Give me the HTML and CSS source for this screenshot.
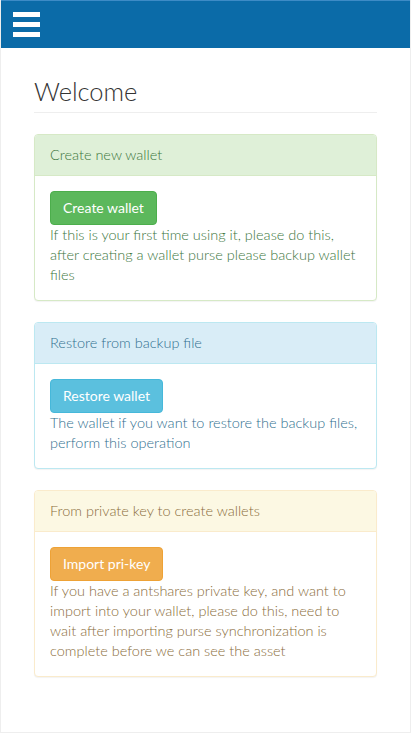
FILE: index.html
```html
<!DOCTYPE html>
<html lang="en">
<head>
<meta charset="utf-8">
<title>Welcome</title>
<link rel="stylesheet" href="styles.css">
</head>
<body>
<header class="topbar">
  <button class="menu-btn" aria-label="Menu">
    <span class="bar"></span>
    <span class="bar"></span>
    <span class="bar"></span>
  </button>
</header>
<main class="content">
  <h2 class="page-title">Welcome</h2>

  <section class="panel panel-success">
    <div class="panel-heading">Create new wallet</div>
    <div class="panel-body">
      <button class="btn btn-success">Create wallet</button>
      <p class="desc">If this is your first time using it, please do this, after creating a wallet purse please backup wallet files</p>
    </div>
  </section>

  <section class="panel panel-info">
    <div class="panel-heading">Restore from backup file</div>
    <div class="panel-body">
      <button class="btn btn-info">Restore wallet</button>
      <p class="desc">The wallet if you want to restore the backup files, perform this operation</p>
    </div>
  </section>

  <section class="panel panel-warning">
    <div class="panel-heading">From private key to create wallets</div>
    <div class="panel-body">
      <button class="btn btn-warning">Import pri-key</button>
      <p class="desc">If you have a antshares private key, and want to import into your wallet, please do this, need to wait after importing purse synchronization is complete before we can see the asset</p>
    </div>
  </section>
</main>
</body>
</html>
```

FILE: styles.css
```css
* { box-sizing: border-box; }

html, body {
  margin: 0;
  padding: 0;
  height: 100%;
}

body {
  font-family: Lato, "Open Sans", "Liberation Sans", sans-serif;
  font-size: 14px;
  line-height: 20px;
  color: #333;
  background: #fff;
  border-left: 1px solid #eeeeee;
  border-right: 1px solid #eeeeee;
  border-bottom: 1px solid #eeeeee;
  display: flex;
  flex-direction: column;
}

.topbar {
  height: 48px;
  background: #0b6ba8;
  border-top: 1px solid #3d8bc6;
  display: flex;
  align-items: flex-start;
  margin: 0 -1px;
}

.menu-btn {
  margin: 11px 0 0 13px;
  padding: 0;
  border: 0;
  background: transparent;
  display: flex;
  flex-direction: column;
  gap: 5px;
  width: 27px;
}

.menu-btn .bar {
  display: block;
  width: 27px;
  height: 5px;
  background: #fff;
}

.content {
  padding: 0 33px 0 33px;
}

.page-title {
  margin: 29px 0 21px 0;
  padding-bottom: 7px;
  border-bottom: 1px solid #eeeeee;
  font-size: 25.5px;
  line-height: 28px;
  font-weight: 300;
  color: #333;
}

.panel {
  border: 1px solid;
  border-radius: 4px;
  margin-bottom: 21px;
  background: #fff;
  box-shadow: 0 1px 1px rgba(0,0,0,0.05);
}

.panel-heading {
  padding: 10px 15px;
  border-bottom: 1px solid;
  border-radius: 3px 3px 0 0;
  font-weight: 300;
  font-size: 14.5px;
}

.panel-body {
  padding: 15px;
  display: flex;
  flex-direction: column;
  align-items: flex-start;
}

.desc {
  margin: 0;
  font-weight: 300;
  font-size: 14.5px;
}

.panel-success { border-color: #d6e9c6; color: #3c763d; }
.panel-success .panel-heading { background: #dff0d8; border-color: #d6e9c6; }

.panel-info { border-color: #bce8f1; color: #31708f; }
.panel-info .panel-heading { background: #d9edf7; border-color: #bce8f1; }

.panel-warning { border-color: #faebcc; color: #8a6d3b; }
.panel-warning .panel-heading { background: #fcf8e3; border-color: #faebcc; }

.btn {
  font-family: inherit;
  font-size: 14px;
  line-height: 20px;
  padding: 6px 12px;
  border: 1px solid transparent;
  border-radius: 4px;
  color: #fff;
  font-weight: 400;
  cursor: pointer;
}

.btn-success { background: #5cb85c; border-color: #4cae4c; }
.btn-info { background: #5bc0de; border-color: #46b8da; }
.btn-warning { background: #f0ad4e; border-color: #eea236; }
```
